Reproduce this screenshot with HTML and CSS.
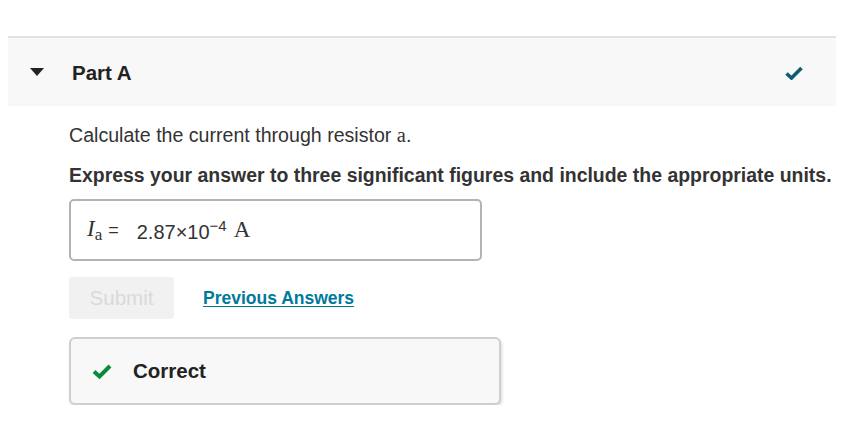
FILE: index.html
```html
<!DOCTYPE html>
<html>
<head>
<meta charset="utf-8">
<link rel="stylesheet" href="styles.css">
</head>
<body>
<div class="part">
  <div class="part-head">
    <span class="caret"></span>
    <span class="part-title">Part A</span>
    <svg class="done" width="18" height="14" viewBox="0 0 18 14"><path d="M1.5 7.5 L6.5 12 L16.5 2" fill="none" stroke="#0f5d70" stroke-width="3.6"/></svg>
  </div>
  <div class="part-body">
    <p class="q">Calculate the current through resistor <span class="serif">a</span>.</p>
    <p class="instr">Express your answer to three significant figures and include the appropriate units.</p>
    <div class="answer">
      <span class="var"><i>I</i><sub>a</sub></span><span class="eq">=</span>
      <span class="val">2.87×10<sup>−4</sup></span><span class="unit">A</span>
    </div>
    <div class="actions">
      <button class="submit">Submit</button>
      <a class="prev" href="#">Previous Answers</a>
    </div>
    <div class="feedback">
      <svg class="ok" width="20" height="16" viewBox="0 0 20 16"><path d="M2 8.5 L7.5 13.5 L18 3" fill="none" stroke="#0b8a3e" stroke-width="4"/></svg>
      <span class="correct">Correct</span>
    </div>
  </div>
</div>
</body>
</html>
```

FILE: styles.css
```css
html, body { margin: 0; padding: 0; background: #fff; }
body { font-family: "Liberation Sans", Arial, sans-serif; color: #333; padding: 36px 16px 0 8px; }
.part { border-top: 2px solid #e2e2e2; }
.part-head {
  display: flex; align-items: center;
  height: 68px; background: #f8f8f8;
  padding: 0 33px 0 22px;
}
.caret {
  width: 0; height: 0;
  border-left: 7px solid transparent; border-right: 7px solid transparent;
  border-top: 8px solid #222;
  margin-right: 28px; margin-top: -1px;
}
.part-title { font-weight: bold; font-size: 20.5px; color: #222; flex: 1; margin-top: 2px; }
.done { margin-top: 2px; }
.part-body { padding: 16px 0 0 61px; }
.q { margin: 0; font-size: 19.6px; line-height: 26px; color: #333; }
.serif { font-family: "Liberation Serif", "Times New Roman", serif; font-size: 20.5px; }
.instr { margin: 14px 0 0; font-size: 19.45px; font-weight: bold; line-height: 26px; color: #333; }
.answer {
  margin-top: 11px; width: 413px; height: 62px; box-sizing: border-box;
  border: 2px solid #b3b3b3; border-radius: 5px;
  display: flex; align-items: center; padding: 0 0 0 16px;
  font-size: 20px; color: #333;
}
.var { font-family: "Liberation Serif", serif; font-size: 23px; }
.var sub { font-size: 17px; vertical-align: -4px; }
.eq { margin: 0 18px 0 6px; font-size: 18px; }
.val sup { font-size: 15px; vertical-align: 8px; }
.unit { font-family: "Liberation Serif", serif; font-size: 23px; margin-left: 7px; }
.actions { display: flex; align-items: center; margin-top: 16px; }
.submit {
  width: 105px; height: 42px; border: none; border-radius: 3px;
  background: #f1f1f1; color: #d9d9d9; padding: 0;
  font-family: "Liberation Sans", Arial, sans-serif; font-size: 20.5px;
}
.prev {
  margin-left: 29px; color: #007a9c; font-weight: bold; font-size: 17.5px;
  text-decoration: underline; text-underline-offset: 2px;
}
.feedback {
  margin-top: 18px; width: 432px; height: 68px; box-sizing: border-box;
  border: 2px solid #cfcfcf; border-radius: 6px; background: #f8f8f8;
  box-shadow: 1px 2px 3px rgba(0,0,0,0.15);
  display: flex; align-items: center; padding-left: 21px;
}
.ok { margin-right: 21px; }
.correct { font-weight: bold; font-size: 20.5px; color: #222; }
```
